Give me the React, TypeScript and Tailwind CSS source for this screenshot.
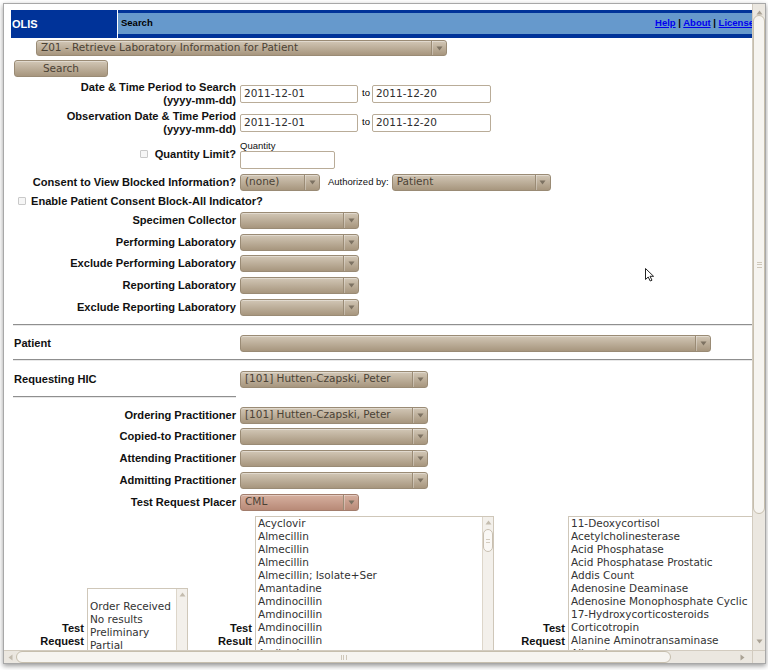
import type { ReactNode } from "react";

const sans = "font-['Liberation_Sans',Arial,sans-serif]";
const deja = "font-['DejaVu_Sans',Verdana,sans-serif]";

const testResultCodes = [
  "Acyclovir",
  "Almecillin",
  "Almecillin",
  "Almecillin",
  "Almecillin; Isolate+Ser",
  "Amantadine",
  "Amdinocillin",
  "Amdinocillin",
  "Amdinocillin",
  "Amdinocillin",
  "Amikacin",
  "Amikacin",
  "Aminoglycoside",
  "Amoxicillin",
  "Amoxicillin+Clavulanate",
  "Amphotericin B",
  "Ampicillin",
  "Ampicillin+Sulbactam",
  "Ampicillin",
  "Anidulafungin",
];

const testRequestCodes = [
  "11-Deoxycortisol",
  "Acetylcholinesterase",
  "Acid Phosphatase",
  "Acid Phosphatase Prostatic",
  "Addis Count",
  "Adenosine Deaminase",
  "Adenosine Monophosphate Cyclic",
  "17-Hydroxycorticosteroids",
  "Corticotropin",
  "Alanine Aminotransaminase",
  "Albumin",
  "Albumin Excretion Rate",
  "Alcohol",
  "Aldolase",
  "Aldosterone",
  "Alkaline Phosphatase",
  "Alpha-1-Antitrypsin",
  "Alpha-Fetoprotein",
  "Aluminum",
  "Amikacin",
];

const requestStatuses = ["", "Order Received", "No results", "Preliminary", "Partial", "Final", "Corrected", "Cancelled"];

function Arrow({ dir, color = "#8f877a" }: { dir: "up" | "down" | "left" | "right"; color?: string }) {
  const d = {
    up: "M0.5 4.5L3.5 0.5L6.5 4.5Z",
    down: "M0.5 0.5L6.5 0.5L3.5 4.5Z",
    left: "M4.5 0.5L4.5 6.5L0.5 3.5Z",
    right: "M0.5 0.5L0.5 6.5L4.5 3.5Z",
  }[dir];
  const horiz = dir === "left" || dir === "right";
  return (
    <svg width={horiz ? 5 : 7} height={horiz ? 7 : 5} viewBox={horiz ? "0 0 5 7" : "0 0 7 5"}>
      <path d={d} fill={color} />
    </svg>
  );
}

function Select({
  w,
  h = "h-[17px]",
  value = "",
  red = false,
}: {
  w: string;
  h?: string;
  value?: string;
  red?: boolean;
}) {
  const tone = red
    ? "border-[#a27d6c] from-[#d6b0a0] to-[#b88a77]"
    : "border-[#9a8b75] from-[#d2c7b6] to-[#a7967e]";
  return (
    <div
      className={`flex ${w} ${h} shrink-0 items-stretch rounded-[3px] border bg-gradient-to-b ${tone} shadow-[inset_0_1px_0_rgba(255,255,255,0.35)]`}
    >
      <span className={`flex flex-1 items-center overflow-hidden whitespace-nowrap pl-[4px] ${deja} text-[10.5px] text-[#4b4235]`}>
        {value}
      </span>
      <span className="flex w-[15px] items-center justify-center border-l border-[#9a8b75] shadow-[inset_1px_0_0_rgba(255,255,255,0.3)]">
        <Arrow dir="down" color="#7d7262" />
      </span>
    </div>
  );
}

function TextBox({ w, value = "" }: { w: string; value?: string }) {
  return (
    <div
      className={`flex ${w} h-[18px] shrink-0 items-center rounded-[2px] border border-[#b9ac98] bg-white pl-[3px] ${deja} text-[10.5px] text-[#2f2f2f]`}
    >
      {value}
    </div>
  );
}

function Check() {
  return <span className="inline-block h-[8px] w-[8px] shrink-0 rounded-[1px] border border-[#c9c9c9] bg-[#f6f6f6]" />;
}

function Row({ label, h, children }: { label: ReactNode; h: string; children?: ReactNode }) {
  return (
    <div className={`flex ${h} items-center`}>
      <div className={`w-[223px] shrink-0 text-right ${sans} text-[11.1px] font-bold leading-[13px] text-[#111]`}>
        {label}
      </div>
      <div className="ml-[4px] flex items-center">{children}</div>
    </div>
  );
}

function LeftRow({ label, h, children }: { label: string; h: string; children?: ReactNode }) {
  return (
    <div className={`flex ${h} items-center`}>
      <div className={`w-[223px] shrink-0 pl-[1px] ${sans} text-[11.1px] font-bold text-[#111]`}>{label}</div>
      <div className="ml-[4px] flex items-center">{children}</div>
    </div>
  );
}

function Rule({ w }: { w: string }) {
  return <div className={`${w} h-[2px] border-t border-b border-t-[#8f8f8f] border-b-[#e8e8e8]`} />;
}

function ListBox({
  w,
  h,
  items,
  bar = true,
  thumb = false,
}: {
  w: string;
  h: string;
  items: string[];
  bar?: boolean;
  thumb?: boolean;
}) {
  return (
    <div className={`flex ${w} ${h} shrink-0 overflow-hidden border border-[#cfc7b9] bg-white`}>
      <div className={`flex-1 overflow-hidden pl-[2px] ${deja} text-[10.5px] leading-[13px] text-[#333]`}>
        {items.map((it, i) =>
          it ? (
            <div key={i} className="whitespace-nowrap">
              {it}
            </div>
          ) : (
            <div key={i} className="h-[11px]" />
          ),
        )}
      </div>
      {bar && (
        <div className="flex w-[11px] shrink-0 flex-col items-center border-l border-[#ddd6ca] bg-[#f3f0eb]">
          <div className="flex h-[11px] items-center">
            <Arrow dir="up" color="#c4bcae" />
          </div>
          {thumb && (
            <div className="mt-[1px] flex h-[23px] w-[10px] items-center justify-center rounded-[5px] border border-[#c9c0b1] bg-[#faf8f5]">
              <span className="h-[4px] w-[4px] border-y border-[#d4ccbf]" />
            </div>
          )}
        </div>
      )}
    </div>
  );
}

function FieldLabel({ w, children }: { w: string; children: ReactNode }) {
  return (
    <div className={`${w} shrink-0 pr-[3px] text-right ${sans} text-[11.1px] font-bold leading-[13px] text-[#111]`}>
      {children}
    </div>
  );
}

function VScroll() {
  return (
    <div className="flex w-[13px] shrink-0 flex-col items-center border-l border-[#d2cbbf] bg-[#ebe7e0]">
      <div className="flex h-[11px] items-end">
        <Arrow dir="up" color="#aaa294" />
      </div>
      <div className="flex h-[499px] w-[12px] items-center justify-center rounded-[6px] border border-[#c6bead] bg-[#f6f4f0]">
        <span className="flex h-[6px] w-[5px] flex-col justify-between">
          <span className="h-px bg-[#cfc7b9]" />
          <span className="h-px bg-[#cfc7b9]" />
          <span className="h-px bg-[#cfc7b9]" />
        </span>
      </div>
      <div className="flex-1" />
      <div className="flex h-[12px] items-start pt-[1px]">
        <Arrow dir="down" color="#aaa294" />
      </div>
    </div>
  );
}

function HScroll() {
  return (
    <div className="flex flex-1 items-center border-t border-[#d2cbbf] bg-[#ebe7e0]">
      <div className="flex w-[12px] justify-center">
        <Arrow dir="left" color="#c2bbae" />
      </div>
      <div className="flex h-[12px] w-[655px] items-center justify-center rounded-[6px] border border-[#c6bead] bg-[#f6f4f0]">
        <span className="flex h-[5px] w-[6px] justify-between">
          <span className="w-px bg-[#cfc7b9]" />
          <span className="w-px bg-[#cfc7b9]" />
          <span className="w-px bg-[#cfc7b9]" />
        </span>
      </div>
      <div className="flex-1" />
      <div className="flex w-[20px] justify-center">
        <Arrow dir="right" color="#aaa294" />
      </div>
    </div>
  );
}

export default function App() {
  return (
    <div className="h-[670px] w-[768px] overflow-hidden bg-white pl-[3px] pt-[3px]">
      <div className="flex h-[661px] w-[763px] flex-col border border-[#a8a8a8] bg-white shadow-[0_2px_5px_rgba(0,0,0,0.4)]">
        <div className="flex min-h-0 flex-1">
          <div className="relative min-w-0 flex-1 overflow-hidden">
            <div className="w-[760px]">
              {/* title bar */}
              <div className={`ml-[7px] mt-[6px] flex h-[28px] w-[746px] ${sans}`}>
                <div className="flex w-[106px] items-center bg-[#003399] pl-[1px] text-[11px] font-bold text-white">
                  OLIS
                </div>
                <div className="ml-[1px] flex flex-1 items-center justify-between border-b-[4px] border-t-[3px] border-[#003399] bg-[#6699cc] pl-[3px] pr-[3px] text-[9.5px] font-bold text-black">
                  <span>Search</span>
                  <span>
                    <a className="text-[#0000ee] underline">Help</a> | <a className="text-[#0000ee] underline">About</a> |{" "}
                    <a className="text-[#0000ee] underline">License</a>
                  </span>
                </div>
              </div>

              <div className="ml-[32px] mt-[2px]">
                <Select w="w-[411px]" h="h-[16px]" value="Z01 - Retrieve Laboratory Information for Patient" />
              </div>

              <div
                className={`ml-[10px] mt-[4px] flex h-[17px] w-[94px] items-center justify-center rounded-[3px] border border-[#9a8b75] bg-gradient-to-b from-[#d2c7b6] to-[#a7967e] ${deja} text-[10.5px] text-[#4b4235] shadow-[inset_0_1px_0_rgba(255,255,255,0.35)]`}
              >
                Search
              </div>

              <div className="ml-[9px]">
                <div className="mt-[3px]">
                  <Row
                    h="h-[27px]"
                    label={
                      <>
                        Date &amp; Time Period to Search
                        <br />
                        (yyyy-mm-dd)
                      </>
                    }
                  >
                    <TextBox w="w-[118px]" value="2011-12-01" />
                    <span className={`ml-[4px] mr-[2px] ${sans} text-[9.5px]`}>to</span>
                    <TextBox w="w-[119px]" value="2011-12-20" />
                  </Row>
                </div>
                <div className="mt-[2px]">
                  <Row
                    h="h-[27px]"
                    label={
                      <>
                        Observation Date &amp; Time Period
                        <br />
                        (yyyy-mm-dd)
                      </>
                    }
                  >
                    <TextBox w="w-[118px]" value="2011-12-01" />
                    <span className={`ml-[4px] mr-[2px] ${sans} text-[9.5px]`}>to</span>
                    <TextBox w="w-[119px]" value="2011-12-20" />
                  </Row>
                </div>
                <div className="mt-[4px]">
                  <Row
                    h="h-[29px]"
                    label={
                      <span className="inline-flex items-center gap-[7px]">
                        <Check />
                        Quantity Limit?
                      </span>
                    }
                  >
                    <div className="flex flex-col">
                      <span className={`${sans} text-[9.5px] leading-[11px] text-[#111]`}>Quantity</span>
                      <TextBox w="w-[95px]" />
                    </div>
                  </Row>
                </div>
                <div className="mt-[4px]">
                  <Row h="h-[18px]" label="Consent to View Blocked Information?">
                    <Select w="w-[80px]" value="(none)" />
                    <span className={`ml-[8px] mr-[3px] ${sans} text-[9.5px] text-[#111]`}>Authorized by:</span>
                    <Select w="w-[159px]" value="Patient" />
                  </Row>
                </div>
                <div className={`mt-[2px] flex h-[16px] items-center gap-[5px] pl-[5px] ${sans} text-[11.1px] font-bold text-[#111]`}>
                  <Check />
                  Enable Patient Consent Block-All Indicator?
                </div>

                <div className="mt-[0.5px]">
                  <Row h="h-[21.75px]" label="Specimen Collector">
                    <Select w="w-[119px]" />
                  </Row>
                  <Row h="h-[21.75px]" label="Performing Laboratory">
                    <Select w="w-[119px]" />
                  </Row>
                  <Row h="h-[21.75px]" label="Exclude Performing Laboratory">
                    <Select w="w-[119px]" />
                  </Row>
                  <Row h="h-[21.75px]" label="Reporting Laboratory">
                    <Select w="w-[119px]" />
                  </Row>
                  <Row h="h-[21.75px]" label="Exclude Reporting Laboratory">
                    <Select w="w-[119px]" />
                  </Row>
                </div>

                <div className="mt-[6px]">
                  <Rule w="w-[760px]" />
                </div>
                <div className="mt-[8px]">
                  <LeftRow h="h-[18px]" label="Patient">
                    <Select w="w-[471px]" />
                  </LeftRow>
                </div>
                <div className="mt-[7px]">
                  <Rule w="w-[760px]" />
                </div>
                <div className="mt-[9px]">
                  <LeftRow h="h-[18px]" label="Requesting HIC">
                    <Select w="w-[188px]" value="[101] Hutten-Czapski, Peter" />
                  </LeftRow>
                </div>
                <div className="mt-[8px]">
                  <Rule w="w-[223px]" />
                </div>

                <div className="mt-[6px]">
                  <Row h="h-[21.75px]" label="Ordering Practitioner">
                    <Select w="w-[188px]" value="[101] Hutten-Czapski, Peter" />
                  </Row>
                  <Row h="h-[21.75px]" label="Copied-to Practitioner">
                    <Select w="w-[188px]" />
                  </Row>
                  <Row h="h-[21.75px]" label="Attending Practitioner">
                    <Select w="w-[188px]" />
                  </Row>
                  <Row h="h-[21.75px]" label="Admitting Practitioner">
                    <Select w="w-[188px]" />
                  </Row>
                  <Row h="h-[21.75px]" label="Test Request Placer">
                    <Select w="w-[119px]" value="CML" red />
                  </Row>
                </div>

                {/* multi-select lists */}
                <div className="mt-[3px] flex w-[760px] items-center">
                  <FieldLabel w="w-[74px]">
                    Test
                    <br />
                    Request
                    <br />
                    Status (max
                    <br />
                    10)
                  </FieldLabel>
                  <ListBox w="w-[101px]" h="h-[121px]" items={requestStatuses} />
                  <FieldLabel w="w-[67px]">
                    Test
                    <br />
                    Result
                    <br />
                    Code (max
                    <br />
                    10)
                  </FieldLabel>
                  <ListBox w="w-[239px]" h="h-[264px]" items={testResultCodes} thumb />
                  <FieldLabel w="w-[74px]">
                    Test
                    <br />
                    Request
                    <br />
                    Code (max
                    <br />
                    10)
                  </FieldLabel>
                  <ListBox w="w-[230px]" h="h-[264px]" items={testRequestCodes} bar={false} />
                </div>
              </div>
            </div>

            {/* mouse pointer */}
            <svg className="absolute left-[641px] top-[264px]" width="10" height="14" viewBox="0 0 10 14">
              <path
                d="M0.5 0.5L0.5 11.5L3.2 9L5.2 13L7 12.2L5 8.3L8.6 8.3Z"
                fill="#fff"
                stroke="#222"
                strokeWidth="1"
                strokeLinejoin="round"
              />
            </svg>
          </div>
          <VScroll />
        </div>
        <div className="flex h-[13px] shrink-0">
          <HScroll />
          <div className="w-[13px] border-l border-t border-[#d2cbbf] bg-[#ebe7e0]" />
        </div>
      </div>
    </div>
  );
}
